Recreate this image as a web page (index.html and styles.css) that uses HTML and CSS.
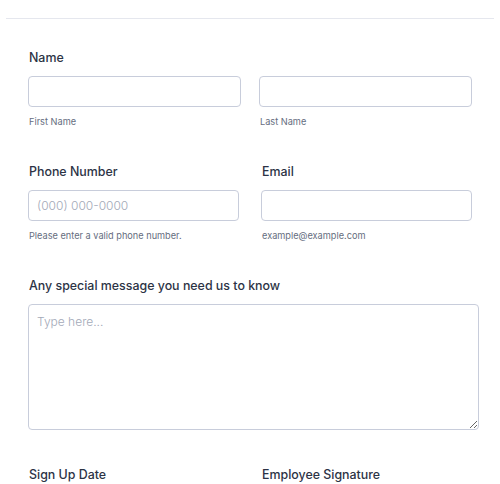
FILE: index.html
```html
<!DOCTYPE html>
<html>
<head>
<meta charset="utf-8">
<link rel="stylesheet" href="styles.css">
</head>
<body>
<div class="topline"></div>
<form class="form">
  <section class="field">
    <div class="label">Name</div>
    <div class="row row-name">
      <div class="col">
        <input class="input" type="text">
        <div class="sub">First Name</div>
      </div>
      <div class="col">
        <input class="input" type="text">
        <div class="sub">Last Name</div>
      </div>
    </div>
  </section>
  <section class="row row-contact">
    <div class="col">
      <div class="label">Phone Number</div>
      <input class="input" type="text" placeholder="(000) 000-0000">
      <div class="sub">Please enter a valid phone number.</div>
    </div>
    <div class="col">
      <div class="label">Email</div>
      <input class="input" type="text">
      <div class="sub">example@example.com</div>
    </div>
  </section>
  <section class="field">
    <div class="label">Any special message you need us to know</div>
    <textarea class="textarea" placeholder="Type here..."></textarea>
  </section>
  <section class="row row-contact row-last">
    <div class="col"><div class="label">Sign Up Date</div></div>
    <div class="col"><div class="label">Employee Signature</div></div>
  </section>
</form>
</body>
</html>
```
FILE: styles.css
```css
html, body {
  margin: 0;
  padding: 0;
  background: #ffffff;
  font-family: Inter, "Noto Sans", "Liberation Sans", sans-serif;
  color: #2c3345;
}
.topline {
  margin: 18px 6px 0;
  border-top: 1px solid #e5e7ee;
}
.form {
  padding: 31px 0 0 28px;
  display: flex;
  flex-direction: column;
  gap: 35px;
}
.field, .col {
  display: flex;
  flex-direction: column;
}
.label {
  font-size: 12.4px;
  line-height: 16px;
  font-weight: 500;
  color: #2c3345;
  margin-left: 1px;
  margin-bottom: 10px;
}
.row {
  display: flex;
}
.row-name { gap: 18px; }
.row-name .col { width: 213px; }
.row-contact { gap: 22px; }
.row-contact .col:first-child { width: 211px; }
.row-contact .col:last-child { width: 211px; }
.row-last { margin-top: 2px; }
.input {
  box-sizing: border-box;
  width: 100%;
  height: 31px;
  margin: 0;
  border: 1px solid #c8cddb;
  border-radius: 4px;
  padding: 0 8px;
  font-family: inherit;
  font-size: 12px;
  color: #2c3345;
  background: #fff;
  outline: none;
}
.input::placeholder, .textarea::placeholder {
  color: #a3a9b8;
  font-weight: 300;
}
.sub {
  margin-top: 8px;
  margin-left: 1px;
  font-size: 9.2px;
  line-height: 14px;
  color: #656d7e;
}
.textarea {
  box-sizing: border-box;
  width: 451px;
  height: 126px;
  margin: 0;
  border: 1px solid #c8cddb;
  border-radius: 4px;
  padding: 8px 8px;
  font-family: inherit;
  font-size: 12px;
  line-height: 18px;
  color: #2c3345;
  background: #fff;
  resize: vertical;
  outline: none;
}
```
